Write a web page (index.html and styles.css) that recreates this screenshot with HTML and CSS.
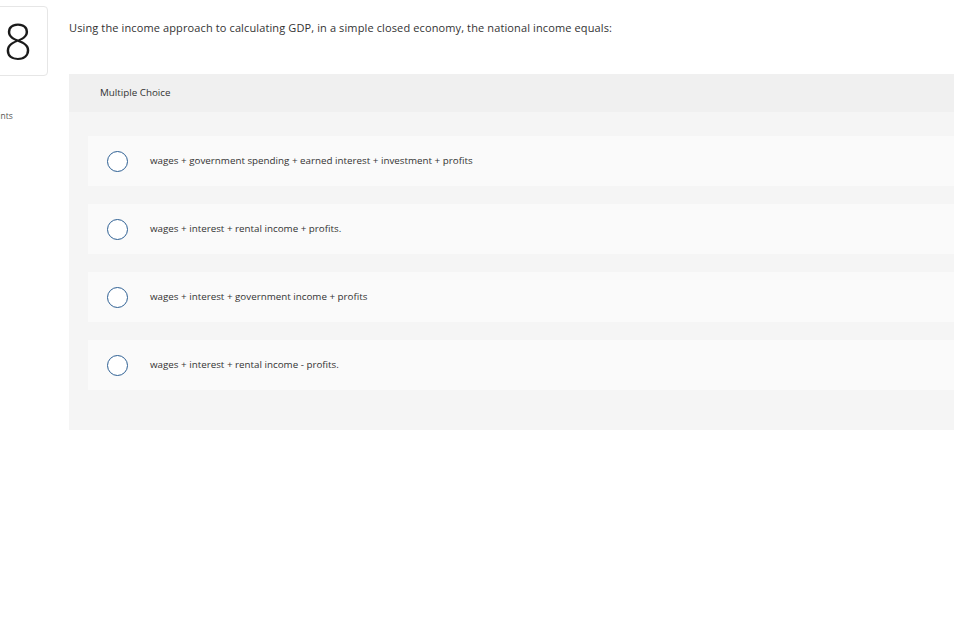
FILE: index.html
```html
<!DOCTYPE html>
<html lang="en">
<head>
  <meta charset="UTF-8" />
  <meta name="viewport" content="width=device-width, initial-scale=1.0" />
  <title>Question 8</title>
  <link rel="stylesheet" href="styles.css">
</head>
<body>
  <div class="page">
    <div class="side">
      <div class="question-number">8</div>
      <div class="points">points</div>
    </div>

    <div class="main">
      <p class="prompt">Using the income approach to calculating GDP, in a simple closed economy, the national income equals:</p>

      <div class="choice-panel">
        <div class="panel-header">Multiple Choice</div>
        <div class="options">
          <label class="option">
            <span class="radio"></span>
            <span class="option-text">wages + government spending + earned interest + investment + profits</span>
          </label>
          <label class="option">
            <span class="radio"></span>
            <span class="option-text">wages + interest + rental income + profits.</span>
          </label>
          <label class="option">
            <span class="radio"></span>
            <span class="option-text">wages + interest + government income + profits</span>
          </label>
          <label class="option">
            <span class="radio"></span>
            <span class="option-text">wages + interest + rental income - profits.</span>
          </label>
        </div>
      </div>
    </div>
  </div>
</body>
</html>
```

FILE: styles.css
```css
body {
  font-family: 'Open Sans', 'Noto Sans', sans-serif;
  background-color: #fff;
  color: #333;
  margin: 0;
  overflow: hidden;
}

.page {
  display: flex;
  gap: 21px;
  width: 1100px;
}

/* Left column: question number box + points label */
.side {
  width: 60px;
  flex-shrink: 0;
  margin-left: -12px;
  padding-top: 6px;
}

.question-number {
  height: 68px;
  border: 1px solid #e6e6e6;
  border-radius: 4px;
  font-weight: 300;
  font-size: 50px;
  line-height: 68px;
  text-align: center;
  color: #1a1a1a;
}

.points {
  margin-top: 34px;
  font-size: 8.5px;
  color: #555;
}

.main {
  flex: 1;
}

.prompt {
  margin: 21px 0 0;
  font-size: 11px;
  letter-spacing: 0.12px;
  line-height: 14px;
  color: #333;
}

.choice-panel {
  margin-top: 39px;
  background-color: #f5f5f5;
  padding-bottom: 40px;
}

.panel-header {
  background-color: #f0f0f0;
  height: 38px;
  line-height: 38px;
  padding-left: 31px;
  font-size: 9.8px;
  color: #333;
}

.options {
  display: flex;
  flex-direction: column;
  gap: 18px;
  padding: 24px 0 0 19px;
}

.option {
  display: flex;
  align-items: center;
  height: 50px;
  background-color: #fafafa;
  padding-left: 19px;
}

.radio {
  width: 19px;
  height: 19px;
  border: 1.5px solid #2d5f93;
  border-radius: 50%;
  background-color: #fff;
  flex-shrink: 0;
}

.option-text {
  margin-left: 22px;
  margin-top: -2px;
  font-size: 9.8px;
  color: #333;
}
```
